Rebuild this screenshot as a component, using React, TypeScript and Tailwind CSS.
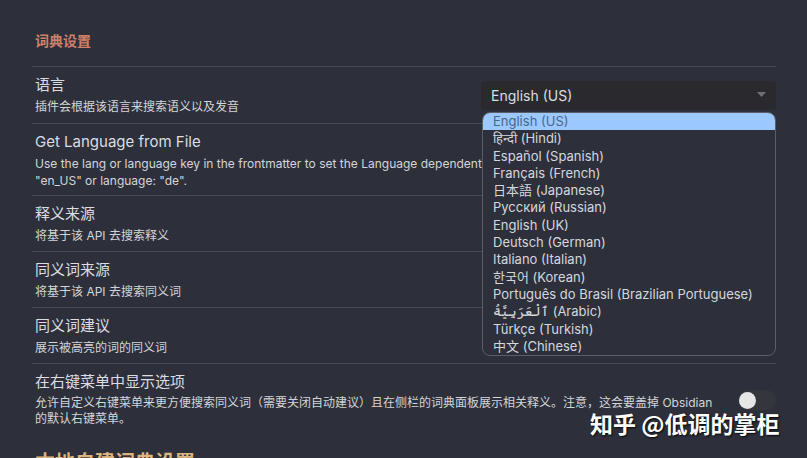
import React from "react";

const FONT = '"Inter", "Noto Sans CJK SC", sans-serif';

const languages = [
  "English (US)",
  "हिन्दी (Hindi)",
  "Español (Spanish)",
  "Français (French)",
  "日本語 (Japanese)",
  "Русский (Russian)",
  "English (UK)",
  "Deutsch (German)",
  "Italiano (Italian)",
  "한국어 (Korean)",
  "Português do Brasil (Brazilian Portuguese)",
  "ٱلْعَرَبِيَّةُ (Arabic)",
  "Türkçe (Turkish)",
  "中文 (Chinese)",
];

function Toggle() {
  return (
    <div className="w-[38px] h-[20px] rounded-full bg-[#34363c] relative shrink-0">
      <div className="absolute left-[1px] top-[2px] w-[17px] h-[17px] rounded-full bg-[#e6e6e6]" />
    </div>
  );
}

function Row({
  title,
  desc,
  control,
  extra = "pb-[7px]",
}: {
  title: string;
  desc: React.ReactNode;
  control?: React.ReactNode;
  extra?: string;
}) {
  return (
    <div className={`border-t border-[#474a54] pt-2 flex items-center ${extra}`}>
      <div className="flex-1 pl-[3px] min-w-0">
        <div className="text-[15px] leading-[20px] text-[#dcdde1]">{title}</div>
        <div className="mt-[3px] text-[12px] leading-[17px] text-[#d4d5d9] whitespace-nowrap">{desc}</div>
      </div>
      {control && <div className="ml-4 shrink-0">{control}</div>}
    </div>
  );
}

export default function App() {
  return (
    <div
      className="w-[807px] h-[458px] bg-[#2d303b] overflow-hidden relative"
      style={{ fontFamily: FONT }}
    >
      <div className="ml-[32px] w-[744px] pt-[31px]">
        <div className="pl-[3px] text-[14px] leading-[20px] font-bold text-[#cf8168] mb-[15px]">
          词典设置
        </div>

        <Row
          title="语言"
          desc="插件会根据该语言来搜索语义以及发音"
          extra="pb-[8px]"
          control={
            <div className="w-[295px] h-[29px] rounded-[4px] bg-[#2a2a2e] flex items-center px-[10px] justify-between">
              <span className="text-[14px] text-[#dcdde1]">English (US)</span>
              <svg width="9" height="6" viewBox="0 0 9 6">
                <path d="M0 0 L9 0 L4.5 5 Z" fill="#6e7078" />
              </svg>
            </div>
          }
        />
        <Row
          title="Get Language from File"
          extra="pb-[6px]"
          desc={
            <>
              Use the lang or language key in the frontmatter to set the Language dependent on your file. Example:
              <br />
              "en_US" or language: "de".
            </>
          }
          control={<Toggle />}
        />
        <Row title="释义来源" desc="将基于该 API 去搜索释义" />
        <Row title="同义词来源" desc="将基于该 API 去搜索同义词" />
        <Row title="同义词建议" desc="展示被高亮的词的同义词" control={<Toggle />} />
        <div className="border-t border-[#474a54] pt-2 flex items-center">
          <div className="flex-1 pl-[3px] min-w-0">
            <div className="text-[15px] leading-[20px] text-[#dcdde1]">在右键菜单中显示选项</div>
            <div className="mt-[3px] text-[12px] leading-[16px] text-[#d4d5d9] whitespace-nowrap">
              允许自定义右键菜单来更方便搜索同义词（需要关闭自动建议）且在侧栏的词典面板展示相关释义。注意，这会要盖掉 Obsidian
              <br />
              的默认右键菜单。
            </div>
          </div>
          <div className="ml-2 shrink-0">
            <Toggle />
          </div>
        </div>
        <div className="pl-[3px] mt-[23px] text-[20px] leading-[26px] font-bold text-[#dcb57e]">
          本地自建词典设置
        </div>
      </div>

      {/* dropdown list */}
      <div className="absolute left-[482px] top-[112px] w-[294px] h-[244px] rounded-[8px] border border-[#5b5e67] bg-[#2d303b] overflow-hidden">
        {languages.map((l, i) => (
          <div
            key={l}
            className={`h-[17.3px] leading-[17.3px] pl-[10px] text-[13px] whitespace-nowrap ${
              i === 0 ? "bg-[#9bc8ff] text-[#48678d]" : "text-[#d6d7db]"
            }`}
          >
            {l}
          </div>
        ))}
      </div>

      {/* watermark */}
      <div
        className="absolute left-[590px] top-[408px] text-[23px] leading-[30px] font-bold text-white whitespace-nowrap"
        style={{ textShadow: "1px 1px 2px rgba(0,0,0,0.9)", fontFamily: '"Noto Sans CJK SC", sans-serif' }}
      >
        知乎 @低调的掌柜
      </div>
    </div>
  );
}
